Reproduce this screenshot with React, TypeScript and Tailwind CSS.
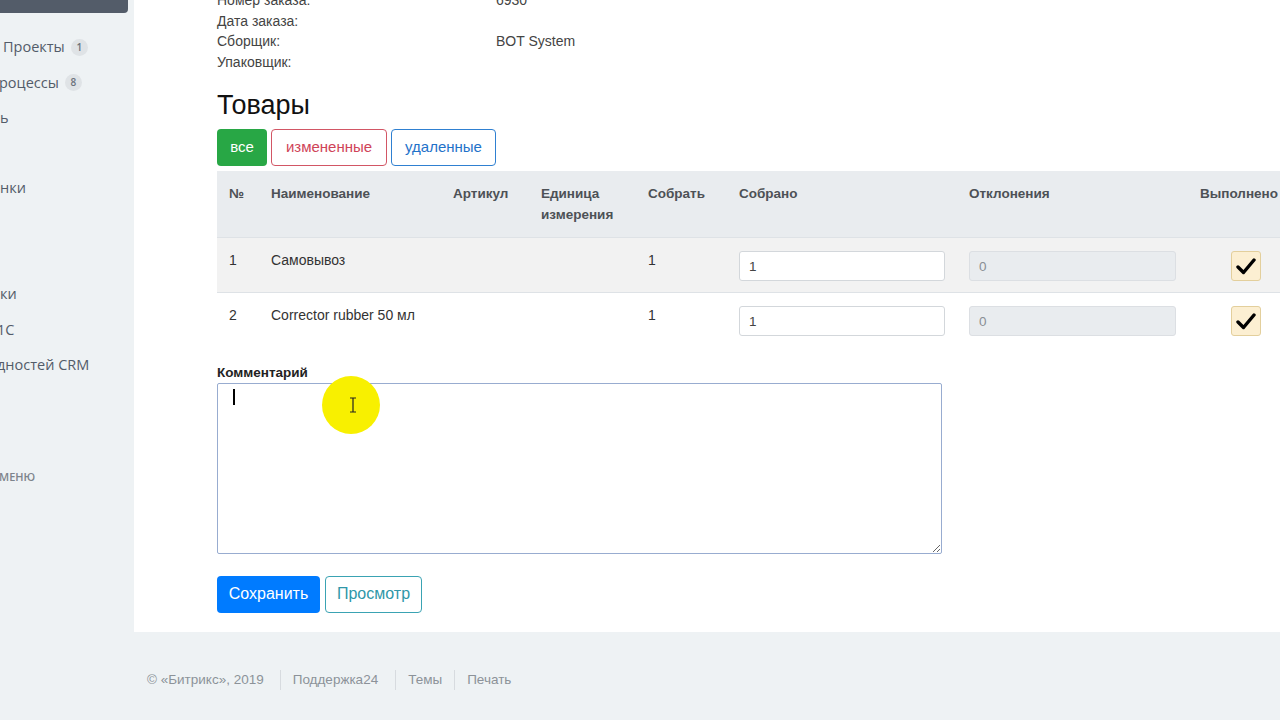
import React from 'react';

const sidebarItems: Array<{ text: string; badge?: string; shift?: number }> = [
  { text: 'Проекты', badge: '1', shift: 3 },
  { text: 'процессы', badge: '8', shift: -10 },
  { text: 'ь', shift: 0 },
  { text: '' },
  { text: 'нки', shift: 0 },
  { text: '' },
  { text: '' },
  { text: 'ки', shift: 0 },
  { text: '1С', shift: -3 },
  { text: 'дностей CRM', shift: -3 },
];

const rows = [
  { n: '1', name: 'Самовывоз', need: '1', got: '1', diff: '0' },
  { n: '2', name: 'Corrector rubber 50 мл', need: '1', got: '1', diff: '0' },
];

function CheckBox() {
  return (
    <span className="inline-flex h-[30px] w-[30px] items-center justify-center rounded-[3px] border border-[#e3cf9c] bg-[#fcefd2]">
      <svg width="20" height="18" viewBox="0 0 20 18">
        <path d="M2 10 L7.5 15.5 L18 3" fill="none" stroke="#000" strokeWidth="3.4" strokeLinecap="round" strokeLinejoin="round" />
      </svg>
    </span>
  );
}

export default function App() {
  return (
    <div className="relative flex h-[720px] w-[1280px] overflow-hidden bg-[#eef2f4] font-['Liberation_Sans',Arial,sans-serif]">
      {/* left menu, scrolled so only tails of labels are visible */}
      <aside className="w-[134px] shrink-0 overflow-hidden font-['Open_Sans',sans-serif] text-[14.5px] text-[#535c69]">
        <div className="h-[13px] w-[128px] rounded-br-[4px] bg-[#535c69]" />
        <div className="pt-[16.5px]">
          {sidebarItems.map((item, i) => (
            <div key={i} className="flex h-[35.3px] items-center whitespace-nowrap">
              {item.text && (
                <span style={{ marginLeft: item.shift }}>{item.text}</span>
              )}
              {item.badge && (
                <span className="ml-[6px] flex h-[17px] w-[17px] items-center justify-center rounded-full bg-[#dfe3e6] text-[10px] font-semibold text-[#6b727b]">
                  {item.badge}
                </span>
              )}
            </div>
          ))}
          <div className="mt-[77px] flex h-[35px] items-center text-[11px] font-semibold uppercase text-[#7d848c]">
            <span className="ml-[-1px]">меню</span>
          </div>
        </div>
      </aside>

      <main className="flex min-w-0 flex-1 flex-col">
        <section className="h-[632px] shrink-0 overflow-hidden bg-white pl-[83px] text-[14px] text-[#3c3c3c]">
          <div className="mt-[-10px] leading-[20.7px] text-[#444]">
            <div className="flex"><span className="w-[279px]">Номер заказа:</span><span>6930</span></div>
            <div className="flex"><span className="w-[279px]">Дата заказа:</span><span></span></div>
            <div className="flex"><span className="w-[279px]">Сборщик:</span><span>BOT System</span></div>
            <div className="flex"><span className="w-[279px]">Упаковщик:</span><span></span></div>
          </div>

          <h3 className="mt-[16px] text-[27px] leading-[32px] text-[#111]">Товары</h3>

          <div className="mt-[8px] flex gap-[4px] text-[15px]">
            <button className="h-[37px] w-[50px] rounded-[4px] bg-[#28a745] text-white">все</button>
            <button className="h-[37px] w-[116px] rounded-[4px] border border-[#d25665] bg-white text-[#cf4458]">измененные</button>
            <button className="h-[37px] w-[105px] rounded-[4px] border border-[#2f80d1] bg-white text-[#1f72c9]">удаленные</button>
          </div>

          <table className="mt-[5px] w-[1087px] table-fixed border-collapse">
            <colgroup>
              <col className="w-[42px]" />
              <col className="w-[182px]" />
              <col className="w-[88px]" />
              <col className="w-[107px]" />
              <col className="w-[91px]" />
              <col className="w-[230px]" />
              <col className="w-[231px]" />
              <col className="w-[116px]" />
            </colgroup>
            <thead>
              <tr className="h-[67px] bg-[#e9ecef] text-left align-top text-[13.5px] font-bold leading-[21px] text-[#4d5156]">
                <th className="px-3 pt-3">№</th>
                <th className="px-3 pt-3">Наименование</th>
                <th className="px-3 pt-3">Артикул</th>
                <th className="px-3 pt-3">Единица измерения</th>
                <th className="px-3 pt-3">Собрать</th>
                <th className="px-3 pt-3">Собрано</th>
                <th className="px-3 pt-3">Отклонения</th>
                <th className="px-3 pt-3">Выполнено</th>
              </tr>
            </thead>
            <tbody>
              {rows.map((r, i) => (
                <tr key={r.n} className={`border-t border-[#dee2e6] align-top leading-[21px] text-[#333] ${i === 0 ? 'bg-[#f2f2f2]' : 'bg-white'}`}>
                  <td className="h-[55px] px-3 pt-3">{r.n}</td>
                  <td className="px-3 pt-3">{r.name}</td>
                  <td className="px-3 pt-3"></td>
                  <td className="px-3 pt-3"></td>
                  <td className="px-3 pt-3">{r.need}</td>
                  <td className="px-3 pt-[13px]">
                    <div className="flex h-[30px] w-[206px] items-center rounded-[3px] border border-[#d3d7db] bg-white px-[9px] text-[13.5px] text-[#444]">{r.got}</div>
                  </td>
                  <td className="px-3 pt-[13px]">
                    <div className="flex h-[30px] w-[207px] items-center rounded-[3px] border border-[#dcdfe3] bg-[#e9ecef] px-[9px] text-[13.5px] text-[#8a8f95]">{r.diff}</div>
                  </td>
                  <td className="pt-[13px] text-center">
                    <CheckBox />
                  </td>
                </tr>
              ))}
            </tbody>
          </table>

          <label className="mt-[16px] block text-[13.5px] font-bold leading-[17px] text-[#222]">Комментарий</label>
          <div className="relative mt-[2px] w-[725px]">
            <textarea className="block h-[171px] w-[725px] resize rounded-[2px] border border-[#98acd0] bg-white p-2 outline-none" />
            <span className="absolute left-[16px] top-[6px] h-[16px] w-[1.5px] bg-black" />
          </div>

          <div className="mt-[22px] flex gap-[5px] text-[16px]">
            <button className="h-[37px] w-[103px] rounded-[4px] bg-[#007bff] text-white">Сохранить</button>
            <button className="h-[37px] w-[97px] rounded-[4px] border border-[#3aa3b3] bg-white text-[#2f97a8]">Просмотр</button>
          </div>
        </section>

        <footer className="flex items-center pl-[13px] pt-[38px] text-[13.5px] leading-[20px] text-[#8c9299]">
          <span className="pr-[16px]">© «Битрикс», 2019</span>
          <span className="border-l border-[#d7dbdf] pl-[12px] pr-[17px]">Поддержка24</span>
          <span className="border-l border-[#d7dbdf] pl-[12px] pr-[12px]">Темы</span>
          <span className="border-l border-[#d7dbdf] pl-[12px]">Печать</span>
        </footer>
      </main>

      {/* yellow cursor highlight */}
      <div className="pointer-events-none absolute left-[322px] top-[376px] flex h-[58px] w-[58px] items-center justify-center rounded-full bg-[#f8f000]">
        <svg width="10" height="16" viewBox="0 0 10 16" className="ml-[4px]">
          <path d="M2 1 H8 M5 1 V15 M2 15 H8" fill="none" stroke="#222" strokeWidth="1.2" />
        </svg>
      </div>
    </div>
  );
}
